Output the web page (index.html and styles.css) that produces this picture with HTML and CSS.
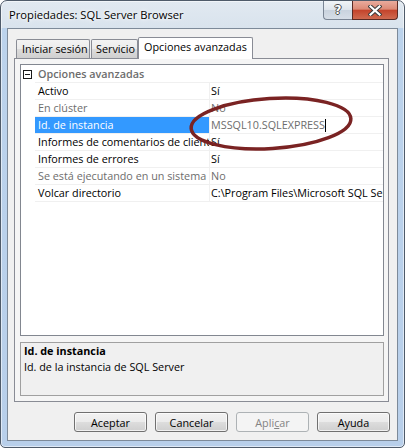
FILE: index.html
```html
<!DOCTYPE html>
<html lang="es">
<head>
<meta charset="utf-8">
<title>Propiedades: SQL Server Browser</title>
<link rel="stylesheet" href="styles.css">
</head>
<body>
<div class="window">
  <div class="titlebar">
    <span class="title">Propiedades: SQL Server Browser</span>
    <div class="caption-buttons">
      <div class="cap-btn cap-help"><span class="help-glyph">?</span></div>
      <div class="cap-btn cap-close">
        <svg width="14" height="11" viewBox="0 0 14 11">
          <path d="M2.5 1.5 L11.5 9.5 M11.5 1.5 L2.5 9.5" stroke="#3d3d3d" stroke-width="4.2" stroke-linecap="square" fill="none"/>
          <path d="M2.5 1.5 L11.5 9.5 M11.5 1.5 L2.5 9.5" stroke="#ffffff" stroke-width="2.2" stroke-linecap="square" fill="none"/>
        </svg>
      </div>
    </div>
  </div>
  <div class="client">
    <div class="tabs">
      <div class="tab tab-login">Iniciar sesión</div>
      <div class="tab tab-service">Servicio</div>
      <div class="tab tab-active">Opciones avanzadas</div>
    </div>
    <div class="panel">
      <div class="grid">
        <div class="row">
          <span class="gutter"><span class="minus"></span></span>
          <span class="cell cat-label">Opciones avanzadas</span>
        </div>
        <div class="row">
          <span class="gutter"></span>
          <span class="cell label">Activo</span>
          <span class="cell value">Sí</span>
        </div>
        <div class="row disabled">
          <span class="gutter"></span>
          <span class="cell label">En clúster</span>
          <span class="cell value">No</span>
        </div>
        <div class="row selected">
          <span class="gutter"></span>
          <span class="cell label">Id. de instancia</span>
          <span class="cell value editing">MSSQL10.SQLEXPRESS<span class="caret"></span></span>
        </div>
        <div class="row">
          <span class="gutter"></span>
          <span class="cell label">Informes de comentarios de cliente</span>
          <span class="cell value">Sí</span>
        </div>
        <div class="row">
          <span class="gutter"></span>
          <span class="cell label">Informes de errores</span>
          <span class="cell value">Sí</span>
        </div>
        <div class="row disabled">
          <span class="gutter"></span>
          <span class="cell label">Se está ejecutando en un sistema de 64 bits</span>
          <span class="cell value">No</span>
        </div>
        <div class="row">
          <span class="gutter"></span>
          <span class="cell label">Volcar directorio</span>
          <span class="cell value">C:\Program Files\Microsoft SQL Server\100\Shared\ErrorDumps\</span>
        </div>
        <svg class="oval" viewBox="0 0 362 270" width="362" height="270">
          <ellipse cx="250" cy="58.5" rx="80" ry="25" transform="rotate(-3.5 250 58.5)" fill="none" stroke="#7a2323" stroke-width="3.5"/>
        </svg>
      </div>
      <div class="desc">
        <div class="desc-title">Id. de instancia</div>
        <div class="desc-text">Id. de la instancia de SQL Server</div>
      </div>
    </div>
    <div class="buttons">
      <button class="btn">Aceptar</button>
      <button class="btn">Cancelar</button>
      <button class="btn btn-disabled">Apli<u>c</u>ar</button>
      <button class="btn">Ayuda</button>
    </div>
  </div>
</div>
</body>
</html>
```
FILE: styles.css
```css
body {
  margin: 0;
  width: 405px;
  height: 448px;
  overflow: hidden;
  background: #ffffff;
  font-family: "Open Sans", "Noto Sans", sans-serif;
  font-size: 10.8px;
  color: #000000;
}

.window {
  box-sizing: border-box;
  width: 405px;
  height: 448px;
  display: flex;
  flex-direction: column;
  border: 1px solid #4f5b6a;
  border-radius: 7px 7px 5px 5px;
  overflow: hidden;
  background: linear-gradient(180deg, #e1e9f1 0px, #d9e3ed 27px, #bcd3ec 27px, #b8cfea 100%);
  box-shadow: inset 0 0 0 1px rgba(255, 255, 255, 0.55);
}

.titlebar {
  flex: none;
  height: 27px;
  display: flex;
  align-items: flex-start;
}

.title {
  margin-left: 8px;
  line-height: 27px;
  white-space: nowrap;
  font-size: 11.2px;
  text-shadow: 0 0 6px #ffffff, 0 0 3px #ffffff;
}

.caption-buttons {
  margin-left: auto;
  margin-right: 6px;
  display: flex;
}

.cap-btn {
  box-sizing: border-box;
  height: 19px;
  display: flex;
  align-items: center;
  justify-content: center;
}

.cap-help {
  width: 29px;
  border: 1px solid #7a8594;
  border-top: none;
  border-right: none;
  border-radius: 0 0 0 4px;
  background: linear-gradient(180deg, #f1f4f7 0%, #dfe5ec 48%, #c9d3de 52%, #d6dee7 100%);
}

.help-glyph {
  font-family: "DejaVu Sans", sans-serif;
  font-weight: 700;
  font-size: 12px;
  line-height: 12px;
  color: #ffffff;
  text-shadow: -1px 0 #4a4a4a, 1px 0 #4a4a4a, 0 -1px #4a4a4a, 0 1px #4a4a4a;
}

.cap-close {
  width: 46px;
  border: 1px solid #5a2a24;
  border-top: none;
  border-radius: 0 0 4px 0;
  background: linear-gradient(180deg, #e9ab9d 0%, #dc8a76 45%, #c4442c 52%, #cf6a50 100%);
}

.client {
  flex: 1;
  min-height: 0;
  margin: 0 6px 6px 6px;
  border: 1px solid #7d8a99;
  background: #f0f0f0;
  display: flex;
  flex-direction: column;
}

.tabs {
  display: flex;
  align-items: flex-end;
  height: 21px;
  margin: 8px 0 0 8px;
  position: relative;
  z-index: 1;
}

.tab {
  box-sizing: border-box;
  height: 19px;
  border: 1px solid #898c95;
  border-bottom: none;
  border-radius: 2px 2px 0 0;
  background: linear-gradient(180deg, #f3f3f3 0%, #ebebeb 50%, #dddddd 50%, #cfcfcf 100%);
  line-height: 17px;
  white-space: nowrap;
  overflow: hidden;
}

.tab-login {
  width: 74px;
  margin-right: 1px;
  padding-left: 5px;
}

.tab-service {
  width: 47px;
  padding-left: 4px;
}

.tab-active {
  width: 115px;
  height: 22px;
  margin-bottom: -1px;
  padding-left: 5px;
  background: #ffffff;
}

.panel {
  box-sizing: border-box;
  margin-left: 6px;
  width: 375px;
  height: 344px;
  border: 1px solid #898c95;
  background: #f5f5f5;
  padding: 5px 4px 5px 5px;
  display: flex;
  flex-direction: column;
  gap: 6px;
}

.grid {
  position: relative;
  box-sizing: border-box;
  width: 364px;
  height: 272px;
  border: 1px solid #828790;
  background: #ffffff;
  padding-top: 1px;
  overflow: hidden;
}

.row {
  display: flex;
  height: 17px;
}

.gutter {
  box-sizing: border-box;
  width: 14px;
  flex: none;
  display: flex;
  align-items: center;
  padding-left: 2px;
}

.minus {
  box-sizing: border-box;
  width: 9px;
  height: 9px;
  border: 1px solid #1a1a1a;
  background: linear-gradient(#1a1a1a, #1a1a1a) center / 5px 1px no-repeat, #ffffff;
}

.cell {
  box-sizing: border-box;
  height: 17px;
  border-bottom: 1px solid #f0f0f0;
  line-height: 16px;
  white-space: nowrap;
  overflow: hidden;
}

.cat-label {
  flex: 1;
  padding-left: 3px;
  color: #6d6d6d;
  font-weight: 600;
}

.label {
  width: 174px;
  flex: none;
  padding-left: 3px;
}

.value {
  flex: 1;
  border-left: 1px solid #f0f0f0;
  padding-left: 1px;
}

.disabled .label,
.disabled .value {
  color: #6d6d6d;
}

.selected .label {
  background: #3399ff;
  color: #ffffff;
}

.editing {
  color: #6d6d6d;
}

.caret {
  display: inline-block;
  width: 1px;
  height: 13px;
  background: #000000;
  vertical-align: -3px;
}

.oval {
  position: absolute;
  left: 0;
  top: 0;
  pointer-events: none;
}

.desc {
  box-sizing: border-box;
  height: 54px;
  border: 1px solid #a0a0a0;
  background: #f0f0f0;
  padding: 0 3px;
  line-height: 16px;
}

.desc-title {
  font-weight: 700;
}

.buttons {
  display: flex;
  justify-content: flex-end;
  gap: 8px;
  padding-right: 7px;
  margin-top: 10px;
}

.btn {
  box-sizing: border-box;
  width: 73px;
  height: 20px;
  margin: 0;
  padding: 0;
  border: 1px solid #707070;
  border-radius: 3px;
  background: linear-gradient(180deg, #f2f2f2 0%, #ebebeb 50%, #dddddd 50%, #cfcfcf 100%);
  box-shadow: inset 0 0 0 1px rgba(255, 255, 255, 0.7);
  font-family: inherit;
  font-size: 10.8px;
  color: #000000;
  display: flex;
  align-items: center;
  justify-content: center;
}

.btn-disabled {
  border-color: #adb2b5;
  background: #f4f4f4;
  box-shadow: none;
  color: #838383;
}
```
